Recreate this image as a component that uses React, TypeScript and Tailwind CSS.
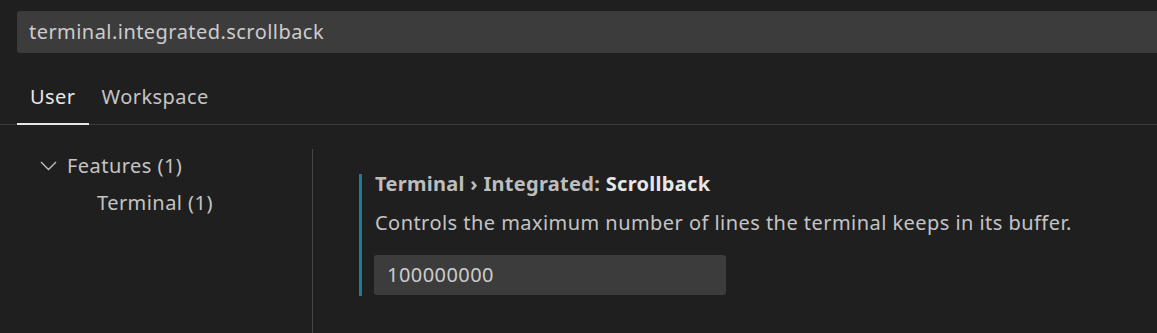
import React from "react";

export default function App() {
  const font = { fontFamily: '"Noto Sans", "Open Sans", sans-serif' };
  return (
    <div
      className="w-[1157px] h-[333px] bg-[#1f1f1f] overflow-hidden flex flex-col text-[#cccccc] tracking-[0.45px]"
      style={font}
    >
      <div className="pt-[11px] pl-[17px]">
        <div className="h-[42px] bg-[#3c3c3c] rounded-l-[3px] flex items-center pl-[12px] text-[20px] text-[#cccccc]">
          terminal.integrated.scrollback
        </div>
      </div>
      <div className="pl-[17px] mt-[23px] flex items-end border-b border-[#3c3c3c] h-[49px] relative">
        <div className="h-full flex items-center px-[13px] pb-[6px] text-[20px] text-[#e7e7e7] relative">
          User
          <div className="absolute left-0 right-0 bottom-[-1px] h-[2px] bg-[#e7e7e7]" />
        </div>
        <div className="h-full flex items-center px-[13px] pb-[6px] text-[20px] text-[#c4c4c4]">
          Workspace
        </div>
      </div>
      <div className="flex flex-1 pt-[22px]">
        <div className="w-[312px] flex flex-col text-[20px] text-[#c4c4c4]">
          <div className="h-[37px] flex items-center pl-[40px]">
            <svg width="17" height="10" viewBox="0 0 17 10" className="mr-[10px]">
              <path d="M1 1 L8.5 8.5 L16 1" fill="none" stroke="#c4c4c4" strokeWidth="1.3" />
            </svg>
            Features (1)
          </div>
          <div className="h-[37px] flex items-center pl-[97px]">Terminal (1)</div>
        </div>
        <div className="w-px bg-[#454545] self-stretch mt-[2px]" />
        <div className="pl-[46px] pt-[27px]">
          <div className="border-l-[3px] border-[#1b7c99] pl-[12px] pb-[1px]">
            <div className="text-[20px] font-bold leading-[20px] h-[20px] text-[#bdbdbd] pl-[1px] tracking-[0.3px]">
              Terminal › Integrated: <span className="text-[#e7e7e7]">Scrollback</span>
            </div>
            <div className="text-[20px] text-[#c4c4c4] mt-[18px] leading-[22px] pl-[1px]">
              Controls the maximum number of lines the terminal keeps in its buffer.
            </div>
            <div className="mt-[21px] w-[352px] h-[40px] bg-[#3c3c3c] rounded-[3px] flex items-center pl-[13px] text-[20px] text-[#cccccc]">
              100000000
            </div>
          </div>
        </div>
      </div>
    </div>
  );
}
